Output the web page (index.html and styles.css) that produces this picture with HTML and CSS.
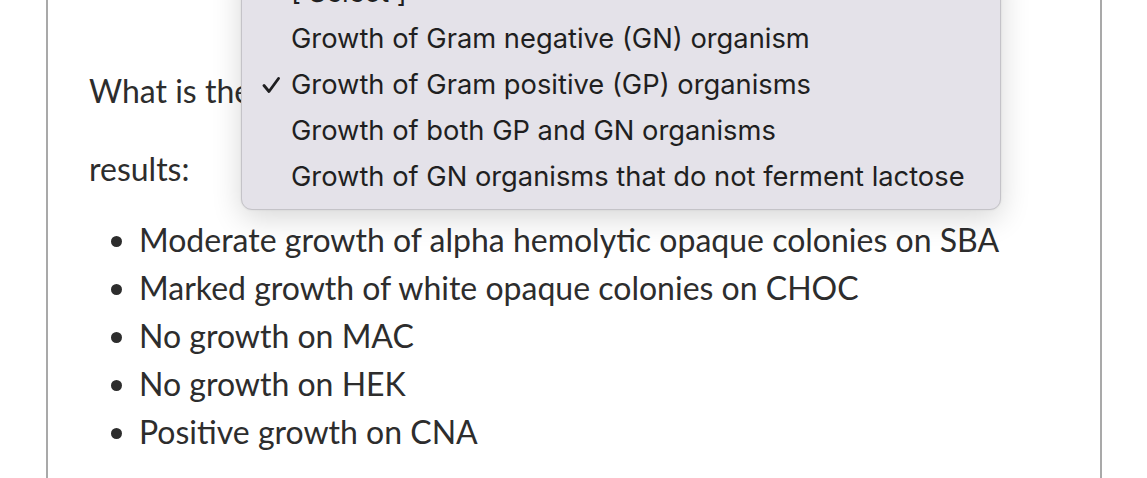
FILE: index.html
```html
<!DOCTYPE html>
<html>
<head>
<meta charset="utf-8">
<link rel="stylesheet" href="styles.css">
</head>
<body>
<div class="frame">
  <div class="question">
    <p class="q-line">What is the</p>
    <p class="q-line">results:</p>
  </div>
  <ul class="findings">
    <li>Moderate growth of alpha hemolytic opaque colonies on SBA</li>
    <li>Marked growth of white opaque colonies on CHOC</li>
    <li>No growth on MAC</li>
    <li>No growth on HEK</li>
    <li>Positive growth on CNA</li>
  </ul>
  <div class="menu">
    <div class="opt">[ Select ]</div>
    <div class="opt">Growth of Gram negative (GN) organism</div>
    <div class="opt selected"><svg class="check" viewBox="0 0 18 18" width="18" height="18"><path d="M2 9.5 L7 15.5 L16.5 2.5" fill="none" stroke="#1f1f21" stroke-width="2.8" stroke-linecap="round" stroke-linejoin="round"/></svg>Growth of Gram positive (GP) organisms</div>
    <div class="opt">Growth of both GP and GN organisms</div>
    <div class="opt">Growth of GN organisms that do not ferment lactose</div>
  </div>
</div>
</body>
</html>
```

FILE: styles.css
```css
html, body {
  margin: 0;
  padding: 0;
  background: #ffffff;
  overflow: hidden;
}

.frame {
  position: relative;
  margin-left: 46px;
  width: 1011px;
  height: 600px;
  border-left: 2px solid #a9a9a9;
  border-right: 2px solid #a9a9a9;
  padding: 0 0 0 41px;
  box-sizing: content-box;
  font-family: Lato, "Noto Sans", sans-serif;
  font-size: 32px;
  color: #2d2d2d;
}

.question {
  display: flex;
  flex-direction: column;
  gap: 30px;
  padding-top: 67px;
}

.q-line {
  margin: 0;
  line-height: 48px;
}

.findings {
  margin: 23px 0 0 0;
  padding-left: 50px;
  list-style: disc;
}

.findings li {
  line-height: 48px;
}

.menu {
  position: absolute;
  left: 193px;
  top: -40px;
  width: 758px;
  padding: 9px 0;
  background: #e4e2e9;
  border: 1px solid #c4c3c8;
  border-radius: 11px;
  box-shadow: 0 8px 30px rgba(0, 0, 0, 0.16), 0 0 2px rgba(0, 0, 0, 0.1);
  font-family: Inter, "Liberation Sans", sans-serif;
  font-size: 27.3px;
  color: #1f1f21;
}

.opt {
  position: relative;
  height: 46px;
  line-height: 46px;
  padding-left: 49px;
  white-space: nowrap;
}

.check {
  position: absolute;
  left: 20px;
  top: 14px;
}
```
